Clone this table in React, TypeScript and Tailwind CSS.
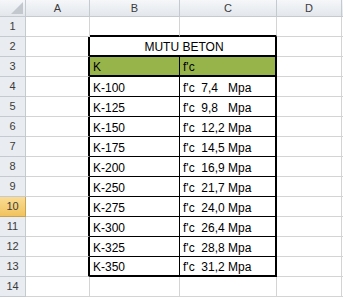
const MUTU = [
  { kelas: 'K-100', fc: "f'c  7,4   Mpa" },
  { kelas: 'K-125', fc: "f'c  9,8   Mpa" },
  { kelas: 'K-150', fc: "f'c  12,2 Mpa" },
  { kelas: 'K-175', fc: "f'c  14,5 Mpa" },
  { kelas: 'K-200', fc: "f'c  16,9 Mpa" },
  { kelas: 'K-250', fc: "f'c  21,7 Mpa" },
  { kelas: 'K-275', fc: "f'c  24,0 Mpa" },
  { kelas: 'K-300', fc: "f'c  26,4 Mpa" },
  { kelas: 'K-325', fc: "f'c  28,8 Mpa" },
  { kelas: 'K-350', fc: "f'c  31,2 Mpa" },
];

const FONT = { fontFamily: '"Liberation Sans", Arial, sans-serif' };

// nomor baris di kolom kiri
const RowHead = ({ n, active = false }: { n: number; active?: boolean }) => (
  <div
    className={
      active
        ? 'flex w-[26px] shrink-0 items-center justify-center border-r border-b border-[#c9a350] bg-gradient-to-b from-[#f9dc94] to-[#f1c35c] text-[11px] text-[#3b3b3b]'
        : 'flex w-[26px] shrink-0 items-center justify-center border-r border-b border-[#c5cad1] bg-[#e9ecf0] text-[11px] text-[#3b3b3b]'
    }
  >
    {n}
  </div>
);

const Cell = ({ className = '', children }: { className?: string; children?: React.ReactNode }) => (
  <div className={`flex shrink-0 items-end overflow-hidden whitespace-pre pb-[2px] pl-[3px] text-[12px] leading-none text-black ${className}`}>
    {children}
  </div>
);

const GRID = 'border-r border-b border-[#d4d4d4]';

export default function App() {
  return (
    <div className="h-[299px] w-[343px] overflow-hidden bg-white" style={FONT}>
      {/* kepala kolom */}
      <div className="flex h-[17px]">
        <div className="relative w-[26px] shrink-0 border-r border-b border-[#c5cad1] bg-gradient-to-b from-[#f5f7f9] to-[#e3e7ec]">
          <svg className="absolute right-[2px] bottom-[2px]" width="12" height="12" viewBox="0 0 12 12">
            <polygon points="12,0 12,12 0,12" fill="#c3c8cf" />
          </svg>
        </div>
        {[
          ['A', 'w-[64px]'],
          ['B', 'w-[90px]'],
          ['C', 'w-[97px]'],
          ['D', 'w-[65px]'],
        ].map(([l, w]) => (
          <div
            key={l}
            className={`flex ${w} shrink-0 items-center justify-center border-r border-b border-[#c5cad1] bg-gradient-to-b from-[#f5f7f9] to-[#e3e7ec] text-[11px] text-[#3b3b3b]`}
          >
            {l}
          </div>
        ))}
        <div className="flex-1 border-b border-[#c5cad1] bg-gradient-to-b from-[#f5f7f9] to-[#e3e7ec]" />
      </div>

      {/* baris 1 */}
      <div className="flex h-[20px]">
        <RowHead n={1} />
        <div className={`w-[64px] shrink-0 ${GRID}`} />
        <div className="w-[90px] shrink-0 border-r border-r-[#d4d4d4] border-b-2 border-b-black" />
        <div className="w-[97px] shrink-0 border-r border-r-[#d4d4d4] border-b-2 border-b-black" />
        <div className={`w-[65px] shrink-0 ${GRID}`} />
        <div className="flex-1 border-b border-[#d4d4d4]" />
      </div>

      {/* baris 2: judul tabel */}
      <div className="flex h-[20px]">
        <RowHead n={2} />
        <div className="w-[64px] shrink-0 border-r-2 border-b border-r-black border-b-[#d4d4d4]" />
        <Cell className="w-[187px] justify-center border-r-2 border-b-2 border-black pl-0">MUTU BETON</Cell>
        <div className={`w-[65px] shrink-0 ${GRID}`} />
        <div className="flex-1 border-b border-[#d4d4d4]" />
      </div>

      {/* baris 3: kepala tabel hijau */}
      <div className="flex h-[20px]">
        <RowHead n={3} />
        <div className="w-[64px] shrink-0 border-r-2 border-b border-r-black border-b-[#d4d4d4]" />
        <Cell className="w-[90px] border-r border-b-2 border-black bg-[#97b44a]">K</Cell>
        <Cell className="w-[97px] border-r-2 border-b-2 border-black bg-[#97b44a]">f'c</Cell>
        <div className={`w-[65px] shrink-0 ${GRID}`} />
        <div className="flex-1 border-b border-[#d4d4d4]" />
      </div>

      {MUTU.map((m, i) => {
        const last = i === MUTU.length - 1;
        return (
          <div key={m.kelas} className="flex h-[20px]">
            <RowHead n={i + 4} active={i + 4 === 10} />
            <div className="w-[64px] shrink-0 border-r-2 border-b border-r-black border-b-[#d4d4d4]" />
            <Cell className={last ? 'w-[90px] border-r border-b-2 border-black' : 'w-[90px] border-r border-b border-black'}>
              {m.kelas}
            </Cell>
            <Cell className={last ? 'w-[97px] border-r-2 border-b-2 border-black' : 'w-[97px] border-r-2 border-b border-black'}>
              {m.fc}
            </Cell>
            <div className={`w-[65px] shrink-0 ${GRID}`} />
            <div className="flex-1 border-b border-[#d4d4d4]" />
          </div>
        );
      })}

      {/* baris 14 */}
      <div className="flex h-[20px]">
        <RowHead n={14} />
        <div className={`w-[64px] shrink-0 ${GRID}`} />
        <div className={`w-[90px] shrink-0 ${GRID}`} />
        <div className={`w-[97px] shrink-0 ${GRID}`} />
        <div className={`w-[65px] shrink-0 ${GRID}`} />
        <div className="flex-1 border-b border-[#d4d4d4]" />
      </div>
    </div>
  );
}
